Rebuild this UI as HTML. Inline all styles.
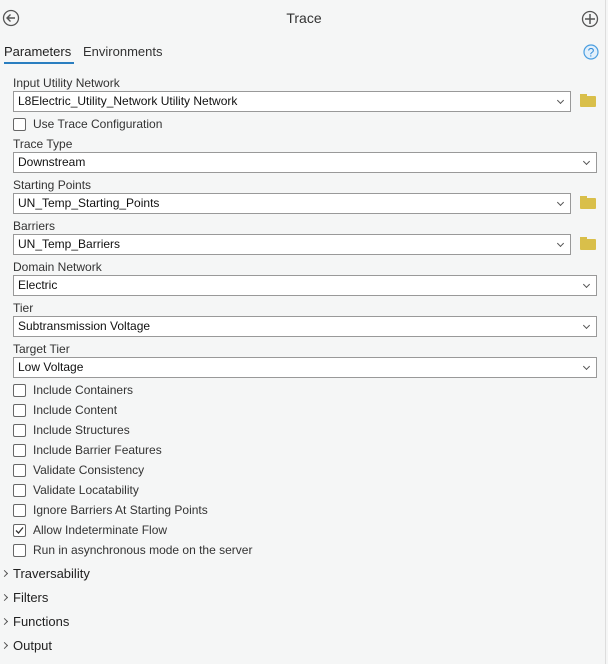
<!DOCTYPE html><html><head><style>
body{margin:0;width:608px;height:664px;background:#f5f6f6;font-family:"Liberation Sans",sans-serif;font-size:12px;color:#222;position:relative;overflow:hidden}
.a{position:absolute}
.lbl{position:absolute;left:13px;color:#333;font-size:12px}
.box{position:absolute;left:13px;height:19px;background:#fff;border:1px solid #999;box-sizing:border-box;height:21px;padding-left:4px;line-height:19px;color:#111}
.box:after{content:"";position:absolute;right:7px;top:6px;width:4px;height:4px;border-right:1px solid #555;border-bottom:1px solid #555;transform:rotate(45deg)}
.cb{position:absolute;left:13px;width:13px;height:13px;border:1px solid #666;border-radius:2px;background:#fff;box-sizing:border-box}
.ct{position:absolute;left:33px;color:#333}
.fold{position:absolute;left:580px;width:16px;height:11px;background:#d9bf4a;border-radius:1px}
.fold:before{content:"";position:absolute;left:0;top:-2px;width:7px;height:3px;background:#d9bf4a}
.sec{position:absolute;left:13px;font-size:13px;color:#222}
.sec:before{content:"";position:absolute;left:-11px;top:5px;width:4px;height:4px;border-right:1px solid #555;border-top:1px solid #555;transform:rotate(45deg)}
</style></head><body>
<div class="a" style="right:2px;top:0;width:1px;height:664px;background:#ddd"></div>
<svg class="a" style="left:2px;top:9px" width="18" height="18" viewBox="0 0 18 18"><circle cx="9" cy="9" r="7.5" fill="none" stroke="#555" stroke-width="1.3"/><path d="M13 9H5M8.5 5.5L5 9l3.5 3.5" fill="none" stroke="#555" stroke-width="1.4"/></svg>
<div class="a" style="left:0;width:608px;top:10px;text-align:center;font-size:14px;color:#333">Trace</div>
<svg class="a" style="left:581px;top:10px" width="18" height="18" viewBox="0 0 18 18"><circle cx="9" cy="9" r="7.5" fill="none" stroke="#555" stroke-width="1.3"/><path d="M9 4v10M4 9h10" stroke="#555" stroke-width="1.5"/></svg>
<svg class="a" style="left:583px;top:44px" width="16" height="16" viewBox="0 0 16 16"><circle cx="8" cy="8" r="7" fill="#e3f0fb" stroke="#4a9ee0" stroke-width="1.2"/><text x="8" y="12.5" text-anchor="middle" font-size="12" font-family="Liberation Sans" fill="#2f8ad8">?</text></svg>
<div class="a" style="left:4px;top:44px;font-size:13px;color:#222">Parameters</div>
<div class="a" style="left:4px;top:62px;width:70px;height:2px;background:#2a7ec0"></div>
<div class="a" style="left:83px;top:44px;font-size:13px;color:#333">Environments</div>

<div class="lbl" style="top:76px">Input Utility Network</div>
<div class="box" style="top:91px;width:558px">L8Electric_Utility_Network Utility Network</div>
<div class="fold" style="top:96px"></div>
<div class="cb" style="top:118px"></div><div class="ct" style="top:117px">Use Trace Configuration</div>

<div class="lbl" style="top:137px">Trace Type</div>
<div class="box" style="top:152px;width:584px">Downstream</div>
<div class="lbl" style="top:178px">Starting Points</div>
<div class="box" style="top:193px;width:558px">UN_Temp_Starting_Points</div>
<div class="fold" style="top:198px"></div>
<div class="lbl" style="top:219px">Barriers</div>
<div class="box" style="top:234px;width:558px">UN_Temp_Barriers</div>
<div class="fold" style="top:239px"></div>
<div class="lbl" style="top:260px">Domain Network</div>
<div class="box" style="top:275px;width:584px">Electric</div>
<div class="lbl" style="top:301px">Tier</div>
<div class="box" style="top:316px;width:584px">Subtransmission Voltage</div>
<div class="lbl" style="top:342px">Target Tier</div>
<div class="box" style="top:357px;width:584px">Low Voltage</div>

<div class="cb" style="top:384px"></div><div class="ct" style="top:383px">Include Containers</div>
<div class="cb" style="top:404px"></div><div class="ct" style="top:403px">Include Content</div>
<div class="cb" style="top:424px"></div><div class="ct" style="top:423px">Include Structures</div>
<div class="cb" style="top:444px"></div><div class="ct" style="top:443px">Include Barrier Features</div>
<div class="cb" style="top:464px"></div><div class="ct" style="top:463px">Validate Consistency</div>
<div class="cb" style="top:484px"></div><div class="ct" style="top:483px">Validate Locatability</div>
<div class="cb" style="top:504px"></div><div class="ct" style="top:503px">Ignore Barriers At Starting Points</div>
<div class="cb" style="top:524px"><svg width="11" height="11" style="position:absolute;left:0;top:0"><path d="M2 5.5l2.5 2.5 4.5-5.5" fill="none" stroke="#333" stroke-width="1.3"/></svg></div><div class="ct" style="top:523px">Allow Indeterminate Flow</div>
<div class="cb" style="top:544px"></div><div class="ct" style="top:543px">Run in asynchronous mode on the server</div>

<div class="sec" style="top:566px">Traversability</div>
<div class="sec" style="top:590px">Filters</div>
<div class="sec" style="top:614px">Functions</div>
<div class="sec" style="top:638px">Output</div>
</body></html>
